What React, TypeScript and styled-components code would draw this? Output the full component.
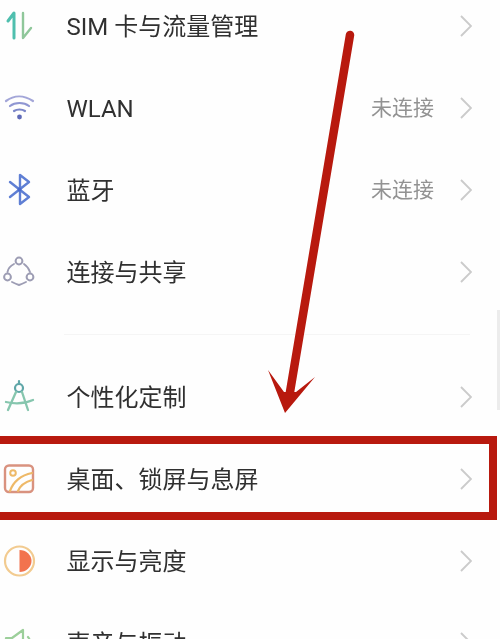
import React from 'react';
import styled, { createGlobalStyle } from 'styled-components';

const GlobalStyle = createGlobalStyle`
  html, body {
    margin: 0;
    padding: 0;
    background: #fefefe;
  }
`;

const Screen = styled.div`
  position: relative;
  width: 500px;
  height: 639px;
  overflow: hidden;
  background: #fefefe;
  font-family: Roboto, "Noto Sans CJK SC", sans-serif;
`;

const List = styled.div`
  display: flex;
  flex-direction: column;
  margin-top: -15px;
  filter: blur(0.6px);
`;

const Row = styled.div`
  display: flex;
  align-items: center;
  height: 82px;
  flex-shrink: 0;
  padding-right: 28px;
`;

const IconSlot = styled.div`
  width: 38px;
  height: 38px;
  margin-right: 28.5px;
  flex-shrink: 0;
  svg {
    display: block;
  }
`;

const Title = styled.span`
  flex: 1;
  font-size: 24px;
  line-height: 32px;
  padding-top: 2px;
  color: #303030;
`;

const Status = styled.span`
  font-size: 21px;
  line-height: 30px;
  color: #929292;
  margin-right: 26px;
`;

const Divider = styled.div`
  height: 1px;
  margin: 21px 30px 21px 64px;
  background: #f5f5f5;
`;

const ScrollThumb = styled.div`
  position: absolute;
  top: 310px;
  right: 0;
  width: 3px;
  height: 100px;
  background: #ececec;
`;

const Highlight = styled.div`
  position: absolute;
  top: 436px;
  left: -12px;
  width: 509px;
  height: 84px;
  box-sizing: border-box;
  border: 8px solid #b8190e;
  filter: blur(0.4px);
`;

const ArrowOverlay = styled.svg`
  position: absolute;
  top: 0;
  left: 0;
  filter: blur(0.4px);
`;

const Chevron = () => (
  <svg width="12" height="22" viewBox="0 0 12 22" fill="none">
    <path d="M1 1 L11 11 L1 21" stroke="#cbcbcb" strokeWidth="1.9" />
  </svg>
);

const Icon = ({ children }: { children: React.ReactNode }) => (
  <IconSlot>
    <svg width="38" height="38" viewBox="0 0 38 38" fill="none" strokeLinecap="round" strokeLinejoin="round">
      {children}
    </svg>
  </IconSlot>
);

const SimIcon = () => (
  <Icon>
    <path d="M14 31 V6 L8 14" stroke="#4fbfae" strokeWidth="3" />
    <path d="M23 6 V31 L31 21" stroke="#8fc79a" strokeWidth="2.4" />
  </Icon>
);

const WifiIcon = () => (
  <Icon>
    <path d="M6 12 C14 6 24 6 33 12" stroke="#a3a6d8" strokeWidth="2.2" />
    <path d="M10 17 C15 13 24 13 29 17" stroke="#8f96d2" strokeWidth="2.2" />
    <path d="M14 22 C17 20 22 20 25 22" stroke="#7a85c8" strokeWidth="2.2" />
    <circle cx="19.5" cy="28" r="2.4" fill="#5f6ab8" />
  </Icon>
);

const BluetoothIcon = () => (
  <Icon>
    <path d="M10 26 L29 11 L20 4 V33 L29 26 L10 11" stroke="#5f7fd4" strokeWidth="2.4" />
    <circle cx="19.5" cy="18.5" r="2" fill="#4a6bcc" />
  </Icon>
);

const ConnectIcon = () => (
  <Icon>
    <circle cx="19" cy="8" r="3.4" stroke="#9d9db4" strokeWidth="2" />
    <circle cx="7.5" cy="24" r="3.4" stroke="#9d9db4" strokeWidth="2" />
    <circle cx="30" cy="24" r="3.4" stroke="#9d9db4" strokeWidth="2" />
    <path d="M14 11 C10 13 8 16 7.5 19" stroke="#9d9db4" strokeWidth="1.9" />
    <path d="M24 11 C27 13 29 16 30 19" stroke="#9d9db4" strokeWidth="1.9" />
    <path d="M12 29 C14 30 16 31 19 32 C22 31 24 30 26 29" stroke="#9d9db4" strokeWidth="1.9" />
  </Icon>
);

const CompassIcon = () => (
  <Icon>
    <circle cx="19" cy="10" r="4" stroke="#5fa6a8" strokeWidth="2.2" />
    <path d="M19 3 V6" stroke="#5fa6a8" strokeWidth="2.2" />
    <path d="M16 14 L8 32" stroke="#86c6ae" strokeWidth="2.3" />
    <path d="M22 14 L28 32" stroke="#86c6ae" strokeWidth="2.3" />
    <path d="M6 24 C14 26 24 26 33 22" stroke="#86c6ae" strokeWidth="2.3" />
  </Icon>
);

const WallpaperIcon = () => (
  <Icon>
    <rect x="5" y="5.5" width="28" height="26.5" rx="4" stroke="#d9927f" strokeWidth="2.4" />
    <circle cx="13" cy="13" r="2.8" stroke="#eeb968" strokeWidth="2" />
    <path d="M10 31 C13 22 21 15 32 13" stroke="#eeb968" strokeWidth="2.2" />
    <path d="M18 31 C20 26 25 22 32 20" stroke="#eeb968" strokeWidth="2.2" />
  </Icon>
);

const DisplayIcon = () => (
  <Icon>
    <circle cx="19.5" cy="19" r="14.5" stroke="#f2cb90" strokeWidth="2.2" />
    <path d="M19.5 8 A12 11 0 0 1 19.5 30 Z" fill="#f2734e" />
  </Icon>
);

const SoundIcon = () => (
  <Icon>
    <path d="M6 14 H12 L23 6 V32 L12 24 H6 Z" stroke="#9ccf9a" strokeWidth="2.2" />
    <path d="M28 13 C31 16 31 22 28 25" stroke="#9ccf9a" strokeWidth="2.2" />
  </Icon>
);

const topItems = [
  { title: 'SIM 卡与流量管理', icon: <SimIcon /> },
  { title: 'WLAN', status: '未连接', icon: <WifiIcon /> },
  { title: '蓝牙', status: '未连接', icon: <BluetoothIcon /> },
  { title: '连接与共享', icon: <ConnectIcon /> },
];

const bottomItems = [
  { title: '个性化定制', icon: <CompassIcon /> },
  { title: '桌面、锁屏与息屏', icon: <WallpaperIcon /> },
  { title: '显示与亮度', icon: <DisplayIcon /> },
  { title: '声音与振动', icon: <SoundIcon /> },
];

const SettingRow = ({ title, status, icon }: { title: string; status?: string; icon: React.ReactNode }) => (
  <Row>
    {icon}
    <Title>{title}</Title>
    {status && <Status>{status}</Status>}
    <Chevron />
  </Row>
);

const App = () => (
  <Screen>
    <GlobalStyle />
    <List>
      {topItems.map((item) => (
        <SettingRow key={item.title} {...item} />
      ))}
      <Divider />
      {bottomItems.map((item) => (
        <SettingRow key={item.title} {...item} />
      ))}
    </List>
    <ScrollThumb />
    <Highlight />
    <ArrowOverlay width="500" height="639" viewBox="0 0 500 639">
      <path d="M350 35 L290 392" stroke="#b8190e" strokeWidth="8.5" strokeLinecap="round" fill="none" />
      <path d="M268 370 L284 392 L296 392 L315 377 L285 413 Z" fill="#b8190e" />
    </ArrowOverlay>
  </Screen>
);

export default App;
